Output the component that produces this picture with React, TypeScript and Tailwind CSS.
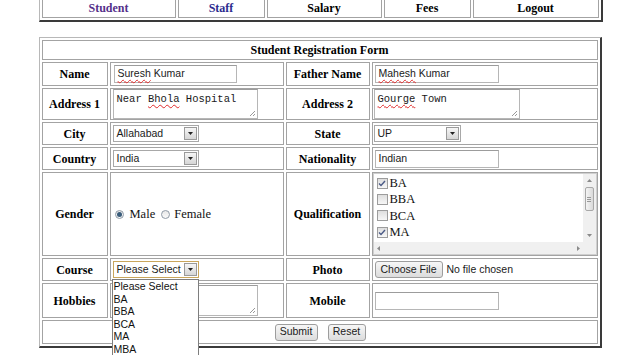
import React from 'react';

const serif = "[font-family:'Liberation_Serif','Times_New_Roman',serif]";
const arial = "[font-family:'Liberation_Sans',Arial,sans-serif]";
const mono = "[font-family:'Liberation_Mono','Courier_New',monospace]";

const cellBorder = 'border border-[#a3a3a3]';
const tableBorder =
  'border-separate border-spacing-[2px] border-t border-l border-r-2 border-b-2 border-t-[#b8b8b8] border-l-[#b8b8b8] border-r-[#3a3a3a] border-b-[#3a3a3a]';

const Typo = ({ children }: { children: React.ReactNode }) => (
  <span className="underline decoration-wavy decoration-[#e02a2a] decoration-1 underline-offset-[2px]">{children}</span>
);

const Arrow = () => (
  <span className="ml-auto mr-[1px] flex h-[13px] w-[13px] items-center justify-center border border-[#9a9a9a] bg-gradient-to-b from-[#f6f6f6] to-[#d6d6d6]">
    <svg width="5" height="3" viewBox="0 0 5 3">
      <path d="M0 0h5L2.5 3z" fill="#222" />
    </svg>
  </span>
);

const Grip = () => (
  <svg className="absolute right-[1px] bottom-[1px]" width="7" height="7" viewBox="0 0 7 7">
    <path d="M6 1L1 6M6 4L4 6" stroke="#9a9a9a" strokeWidth="1" />
  </svg>
);

function TextBox({ w, children }: { w: string; children?: React.ReactNode }) {
  return (
    <div className={`flex h-[18px] items-center border border-[#b6b6b6] border-t-[#9c9c9c] bg-white pl-[3px] text-[10.5px] text-[#1a1a1a] ${arial} ${w}`}>
      {children}
    </div>
  );
}

function Select({ w, value, focus }: { w: string; value: string; focus?: boolean }) {
  return (
    <div
      className={`flex h-[17px] items-center border bg-white pl-[3px] text-[10.5px] text-[#1a1a1a] ${arial} ${w} ${
        focus ? 'border-[#c9a65c]' : 'border-[#a8a8a8]'
      }`}
    >
      {value}
      <Arrow />
    </div>
  );
}

function TextArea({ w, h, children }: { w: string; h: string; children?: React.ReactNode }) {
  return (
    <div className={`relative border border-[#b6b6b6] border-t-[#9c9c9c] bg-white pl-[3px] pt-[3px] text-[10.5px] leading-[12px] text-[#1a1a1a] ${mono} ${w} ${h}`}>
      {children}
      <Grip />
    </div>
  );
}

function Button({ children, w }: { children: React.ReactNode; w: string }) {
  return (
    <div className={`flex h-[17px] items-center justify-center rounded-[3px] border border-[#9d9d9d] bg-gradient-to-b from-[#f7f7f7] to-[#dcdcdc] text-[10.5px] text-[#1a1a1a] ${arial} ${w}`}>
      {children}
    </div>
  );
}

function Label({ children, h }: { children: React.ReactNode; h: string }) {
  return <td className={`${cellBorder} ${h} text-center text-[12px] font-bold text-black ${serif}`}>{children}</td>;
}

function Radio({ on }: { on?: boolean }) {
  return (
    <span className="flex h-[9px] w-[9px] items-center justify-center rounded-full border border-[#8f9aa6] bg-gradient-to-b from-[#e8e8e8] to-[#fafafa]">
      {on && <span className="h-[5px] w-[5px] rounded-full bg-[#3a5c7a]" />}
    </span>
  );
}

function Check({ on, label }: { on?: boolean; label: string }) {
  return (
    <div className={`flex h-[16.4px] items-center text-[12.5px] text-[#111] ${serif}`}>
      <span className="mr-[2px] flex h-[11px] w-[11px] items-center justify-center border border-[#9c9c9c] bg-gradient-to-b from-[#dedede] to-[#f7f7f7]">
        {on && (
          <svg width="8" height="7" viewBox="0 0 8 7">
            <path d="M1 3.5L3 5.5L7 1" stroke="#4a5a86" strokeWidth="1.4" fill="none" />
          </svg>
        )}
      </span>
      {label}
    </div>
  );
}

const ScrollArrow = ({ dir }: { dir: 'up' | 'down' | 'left' | 'right' }) => {
  const d = { up: 'M0 3h5L2.5 0z', down: 'M0 0h5L2.5 3z', left: 'M3 0v5L0 2.5z', right: 'M0 0v5L3 2.5z' }[dir];
  const horiz = dir === 'left' || dir === 'right';
  return (
    <svg width={horiz ? 3 : 5} height={horiz ? 5 : 3} viewBox={horiz ? '0 0 3 5' : '0 0 5 3'}>
      <path d={d} fill="#8a8a8a" />
    </svg>
  );
};

const courses = ['Please Select', 'BA', 'BBA', 'BCA', 'MA', 'MBA', 'MCA', 'MSc'];

export default function App() {
  return (
    <div className="min-h-screen bg-white">
      <div className="mx-auto -mt-[5px] w-[563px]">
        {/* Menu */}
        <table className={`w-[563px] table-fixed ${tableBorder}`}>
          <colgroup>
            <col className="w-[134px]" />
            <col className="w-[87px]" />
            <col className="w-[115px]" />
            <col className="w-[87px]" />
            <col className="w-[126px]" />
          </colgroup>
          <tbody>
            <tr className={`text-center text-[12px] font-bold ${serif}`}>
              <td className={`${cellBorder} h-[19px] text-[#55308a]`}>Student</td>
              <td className={`${cellBorder} text-[#2b2b8f]`}>Staff</td>
              <td className={cellBorder}>Salary</td>
              <td className={cellBorder}>Fees</td>
              <td className={cellBorder}>Logout</td>
            </tr>
          </tbody>
        </table>

        {/* Form */}
        <table className={`mt-[15px] w-[563px] table-fixed ${tableBorder}`}>
          <colgroup>
            <col className="w-[66px]" />
            <col className="w-[174px]" />
            <col className="w-[84px]" />
            <col className="w-[226px]" />
          </colgroup>
          <tbody>
            <tr>
              <td colSpan={4} className={`${cellBorder} h-[18px] text-center text-[12px] font-bold ${serif}`}>
                Student Registration Form
              </td>
            </tr>
            <tr>
              <Label h="h-[24px]">Name</Label>
              <td className={`${cellBorder} pl-[3px]`}>
                <TextBox w="w-[123px]">
                  <Typo>Suresh</Typo>&nbsp;Kumar
                </TextBox>
              </td>
              <Label h="h-[24px]">Father Name</Label>
              <td className={`${cellBorder} pl-[2px]`}>
                <TextBox w="w-[124px]">
                  <Typo>Mahesh</Typo>&nbsp;Kumar
                </TextBox>
              </td>
            </tr>
            <tr>
              <Label h="h-[32px]">Address 1</Label>
              <td className={`${cellBorder} pl-[2px]`}>
                <TextArea w="w-[145px]" h="h-[30px]">
                  Near <Typo>Bhola</Typo> Hospital
                </TextArea>
              </td>
              <Label h="h-[32px]">Address 2</Label>
              <td className={`${cellBorder} pl-[1px]`}>
                <TextArea w="w-[146px]" h="h-[30px]">
                  <Typo>Gourge</Typo> Town
                </TextArea>
              </td>
            </tr>
            <tr>
              <Label h="h-[23px]">City</Label>
              <td className={`${cellBorder} pl-[2px]`}>
                <Select w="w-[86px]" value="Allahabad" />
              </td>
              <Label h="h-[23px]">State</Label>
              <td className={`${cellBorder} pl-[1px]`}>
                <Select w="w-[87px]" value="UP" />
              </td>
            </tr>
            <tr>
              <Label h="h-[23px]">Country</Label>
              <td className={`${cellBorder} pl-[2px]`}>
                <Select w="w-[86px]" value="India" />
              </td>
              <Label h="h-[23px]">Nationality</Label>
              <td className={`${cellBorder} pl-[2px]`}>
                <TextBox w="w-[124px]">Indian</TextBox>
              </td>
            </tr>
            <tr>
              <Label h="h-[84px]">Gender</Label>
              <td className={`${cellBorder} pl-[4px]`}>
                <div className={`flex items-center text-[12.5px] text-[#111] ${serif}`}>
                  <Radio on />
                  <span className="ml-[6px]">Male</span>
                  <span className="ml-[6px]">
                    <Radio />
                  </span>
                  <span className="ml-[4px]">Female</span>
                </div>
              </td>
              <Label h="h-[84px]">Qualification</Label>
              <td className={`${cellBorder} p-0`}>
                <div className="flex h-[82px] border border-[#cfcfcf] bg-white">
                  <div className="flex flex-1 flex-col">
                    <div className="flex-1 pl-[3px] pt-[1px]">
                      <Check on label="BA" />
                      <Check label="BBA" />
                      <Check label="BCA" />
                      <Check on label="MA" />
                    </div>
                    <div className="flex h-[12px] items-center justify-between bg-[#f0f0f0] px-[3px]">
                      <ScrollArrow dir="left" />
                      <ScrollArrow dir="right" />
                    </div>
                  </div>
                  <div className="flex w-[13px] flex-col">
                    <div className="flex flex-1 flex-col items-center bg-[#f0f0f0] py-[5px]">
                      <ScrollArrow dir="up" />
                      <div className="mt-[5px] flex h-[24px] w-[9px] flex-col items-center justify-center gap-[1px] rounded-[2px] border border-[#a8a8a8] bg-gradient-to-r from-[#f4f4f4] to-[#dadada]">
                        <span className="h-px w-[4px] bg-[#999]" />
                        <span className="h-px w-[4px] bg-[#999]" />
                        <span className="h-px w-[4px] bg-[#999]" />
                      </div>
                      <span className="flex-1" />
                      <ScrollArrow dir="down" />
                    </div>
                    <div className="h-[12px] bg-[#f0f0f0]" />
                  </div>
                </div>
              </td>
            </tr>
            <tr>
              <Label h="h-[23px]">Course</Label>
              <td className={`${cellBorder} pl-[2px]`}>
                <div className="relative">
                  <Select w="w-[86px]" value="Please Select" focus />
                  <div className={`absolute left-[-1px] top-[18px] z-10 w-[87px] border border-[#7e7e7e] bg-white text-[10.5px] leading-[12.6px] text-[#111] ${arial}`}>
                    {courses.map((c) => (
                      <div key={c} className={c === 'MCA' ? 'bg-[#3399ff] pl-[1px] text-white' : 'pl-[1px]'}>
                        {c}
                      </div>
                    ))}
                  </div>
                </div>
              </td>
              <Label h="h-[23px]">Photo</Label>
              <td className={`${cellBorder} pl-[2px]`}>
                <div className={`flex items-center text-[10.5px] text-[#1a1a1a] ${arial}`}>
                  <Button w="w-[68px]">Choose File</Button>
                  <span className="ml-[4px]">No file chosen</span>
                </div>
              </td>
            </tr>
            <tr>
              <Label h="h-[35px]">Hobbies</Label>
              <td className={`${cellBorder} pl-[2px]`}>
                <TextArea w="w-[145px]" h="h-[31px]" />
              </td>
              <Label h="h-[35px]">Mobile</Label>
              <td className={`${cellBorder} pl-[2px]`}>
                <TextBox w="w-[124px]" />
              </td>
            </tr>
            <tr>
              <td colSpan={4} className={`${cellBorder} h-[24px]`}>
                <div className="flex items-center justify-center gap-[10px] pl-[1px]">
                  <Button w="w-[43px]">Submit</Button>
                  <Button w="w-[38px]">Reset</Button>
                </div>
              </td>
            </tr>
          </tbody>
        </table>
      </div>
    </div>
  );
}
